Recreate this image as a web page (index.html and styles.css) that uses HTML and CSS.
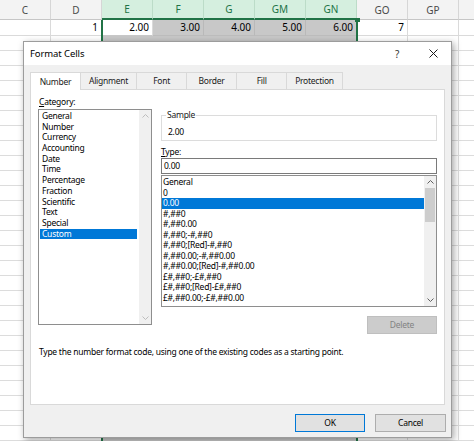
FILE: index.html
```html
<!DOCTYPE html>
<html>
<head>
<meta charset="utf-8">
<title>Format Cells</title>
<link rel="stylesheet" href="styles.css">
</head>
<body>
<div class="sheet">
  <div class="heads">
    <div class="h">C</div>
    <div class="h">D</div>
    <div class="h sel">E</div>
    <div class="h sel">F</div>
    <div class="h sel">G</div>
    <div class="h sel">GM</div>
    <div class="h sel">GN</div>
    <div class="h">GO</div>
    <div class="h">GP</div>
    <div class="h"></div>
  </div>
  <div class="row">
    <div class="c"></div>
    <div class="c">1</div>
    <div class="c active">2.00</div>
    <div class="c sel">3.00</div>
    <div class="c sel">4.00</div>
    <div class="c sel">5.00</div>
    <div class="c sel last">6.00</div>
    <div class="c">7</div>
    <div class="c"></div>
    <div class="c"></div>
  </div>
  <div class="rest"></div>
  <div class="selection"><span class="handle"></span></div>
</div>

<div class="dialog">
  <div class="titlebar">
    <span class="title">Format Cells</span>
    <span class="help">?</span>
    <svg class="close" width="9" height="9" viewBox="0 0 9 9"><path d="M0.5 0.5 L8.5 8.5 M8.5 0.5 L0.5 8.5" stroke="#1a1a1a" stroke-width="1" fill="none"/></svg>
  </div>
  <div class="dlg-body">
    <div class="tabs">
      <div class="tab active">Number</div>
      <div class="tab">Alignment</div>
      <div class="tab">Font</div>
      <div class="tab">Border</div>
      <div class="tab">Fill</div>
      <div class="tab">Protection</div>
    </div>
    <div class="panel">
      <div class="panel-main">
        <div class="col-left">
          <div class="label"><u>C</u>ategory:</div>
          <div class="listbox cat">
            <div class="items">
              <div class="item">General</div>
              <div class="item">Number</div>
              <div class="item">Currency</div>
              <div class="item">Accounting</div>
              <div class="item">Date</div>
              <div class="item">Time</div>
              <div class="item">Percentage</div>
              <div class="item">Fraction</div>
              <div class="item">Scientific</div>
              <div class="item">Text</div>
              <div class="item">Special</div>
              <div class="item selected">Custom</div>
            </div>
            <div class="vscroll disabled">
              <div class="arrow"><svg width="7" height="4" viewBox="0 0 7 4"><polyline points="0.5,3.5 3.5,0.5 6.5,3.5" fill="none" stroke="currentColor" stroke-width="1"/></svg></div>
              <div class="track"></div>
              <div class="arrow"><svg width="7" height="4" viewBox="0 0 7 4"><polyline points="0.5,0.5 3.5,3.5 6.5,0.5" fill="none" stroke="currentColor" stroke-width="1"/></svg></div>
            </div>
          </div>
        </div>
        <div class="col-right">
          <fieldset class="sample">
            <legend>Sample</legend>
            <div class="sample-val">2.00</div>
          </fieldset>
          <div class="label type-label"><u>T</u>ype:</div>
          <div class="input">0.00</div>
          <div class="listbox types">
            <div class="items">
              <div class="item">General</div>
              <div class="item">0</div>
              <div class="item selected">0.00</div>
              <div class="item">#,##0</div>
              <div class="item">#,##0.00</div>
              <div class="item">#,##0;-#,##0</div>
              <div class="item">#,##0;[Red]-#,##0</div>
              <div class="item">#,##0.00;-#,##0.00</div>
              <div class="item">#,##0.00;[Red]-#,##0.00</div>
              <div class="item">£#,##0;-£#,##0</div>
              <div class="item">£#,##0;[Red]-£#,##0</div>
              <div class="item">£#,##0.00;-£#,##0.00</div>
            </div>
            <div class="vscroll">
              <div class="arrow"><svg width="7" height="4" viewBox="0 0 7 4"><polyline points="0.5,3.5 3.5,0.5 6.5,3.5" fill="none" stroke="currentColor" stroke-width="1"/></svg></div>
              <div class="thumb"></div>
              <div class="track"></div>
              <div class="arrow"><svg width="7" height="4" viewBox="0 0 7 4"><polyline points="0.5,0.5 3.5,3.5 6.5,0.5" fill="none" stroke="currentColor" stroke-width="1"/></svg></div>
            </div>
          </div>
          <div class="btn-row"><div class="btn disabled">Delete</div></div>
        </div>
      </div>
      <p class="desc">Type the number format code, using one of the existing codes as a starting point.</p>
    </div>
    <div class="footer">
      <div class="btn default">OK</div>
      <div class="btn">Cancel</div>
    </div>
  </div>
</div>
</body>
</html>
```

FILE: styles.css
```css
* { box-sizing: border-box; }
html, body { margin: 0; padding: 0; }
body {
  width: 474px;
  height: 441px;
  overflow: hidden;
  position: relative;
  background: #fff;
  font-family: "Noto Sans", "Open Sans", sans-serif;
  color: #000;
}

/* ---------- spreadsheet ---------- */
.sheet {
  position: relative;
  width: 474px;
  height: 441px;
  overflow: hidden;
}
.heads, .row {
  display: flex;
  width: 510px;
}
.h {
  flex: 0 0 51px;
  height: 20px;
  background: #f3f3f3;
  border-right: 1px solid #d6d6d6;
  border-bottom: 1px solid #c6c6c6;
  color: #4a4a4a;
  font-size: 10px;
  display: flex;
  align-items: center;
  justify-content: center;
}
.h.sel {
  background: #d5efdf;
  color: #217346;
  border-right-color: #bcdcc8;
  border-bottom: 2px solid #217346;
}
.c {
  flex: 0 0 51px;
  height: 16px;
  border-right: 1px solid #dadada;
  border-bottom: 1px solid #dadada;
  font-size: 10px;
  line-height: 14px;
  text-align: right;
  padding-right: 3px;
}
.c.sel {
  background: #c8c8c8;
  border-right-color: #b9b9b9;
  border-bottom-color: #bdbdbd;
}
.c.active { background: #fff; border-bottom-color: #c8c8c8; }
.rest {
  height: 405px;
  width: 510px;
  background-image:
    linear-gradient(to right, transparent 102px, #c8c8c8 102px, #c8c8c8 357px, transparent 357px),
    repeating-linear-gradient(to bottom, transparent 0 14px, #dcdcdc 14px 15px),
    repeating-linear-gradient(to right, transparent 0 50px, #dcdcdc 50px 51px);
}
.selection {
  position: absolute;
  left: 101px;
  top: 20px;
  width: 257px;
  bottom: 0;
  border-left: 2px solid #217346;
  border-right: 2px solid #217346;
}
.handle {
  position: absolute;
  right: -4px;
  top: -2px;
  width: 5px;
  height: 4px;
  background: #217346;
}

/* ---------- dialog ---------- */
.dialog {
  position: absolute;
  left: 23px;
  top: 41px;
  width: 429px;
  height: 397px;
  border: 1px solid #9c9c9c;
  box-shadow: 2px 2px 7px rgba(0, 0, 0, 0.35);
  display: flex;
  flex-direction: column;
  font-size: 8.5px;
  letter-spacing: -0.25px;
  background: #f0f0f0;
}
.titlebar {
  height: 23px;
  flex: 0 0 23px;
  background: #fff;
  display: flex;
  align-items: center;
  padding: 0 13px 0 6px;
}
.title { font-size: 9.5px; letter-spacing: -0.1px; }
.help {
  margin-left: auto;
  width: 12px;
  text-align: center;
  font-size: 10px;
  color: #333;
}
.close { margin-left: 26px; display: block; }

.dlg-body {
  flex: 1;
  padding: 7px 6px 0 6px;
  display: flex;
  flex-direction: column;
}
.tabs {
  display: flex;
  align-items: flex-end;
  height: 17px;
  padding-left: 0;
}
.tab {
  min-width: 51px;
  height: 17px;
  padding: 0 8px;
  margin-right: -1px;
  border: 1px solid #d9d9d9;
  border-bottom: none;
  background: #f0f0f0;
  text-align: center;
  line-height: 16px;
  color: #1a1a1a;
}
.tab.active {
  background: #fff;
  height: 18px;
  margin-bottom: -1px;
  position: relative;
  z-index: 1;
  line-height: 18px;
}
.panel {
  height: 316px;
  background: #fff;
  border: 1px solid #d9d9d9;
  padding: 6px 0 0 7px;
}
.panel-main {
  display: flex;
  align-items: flex-start;
}
.label {
  line-height: 12px;
  height: 12px;
  padding-left: 1px;
}
.col-left { width: 114px; }
.col-left .label { margin-bottom: 1px; }
.col-right {
  width: 276px;
  margin-left: 9px;
  display: flex;
  flex-direction: column;
}

.listbox {
  border: 1px solid #8e8e8e;
  background: #fff;
  display: flex;
}
.listbox .items { flex: 1; padding-top: 1px; }
.item {
  height: 10.7px;
  line-height: 10.7px;
  padding-left: 2px;
  white-space: nowrap;
}
.item.selected { background: #0078d7; color: #fff; }
.cat { height: 216px; }
.cat .items { padding: 1px 2px 0 1px; }
.types { height: 132px; margin-top: 1px; }
.types .item { height: 10.5px; line-height: 10.5px; padding-left: 1px; }

.vscroll {
  width: 12px;
  flex: 0 0 12px;
  background: #f0f0f0;
  display: flex;
  flex-direction: column;
  color: #606060;
}
.vscroll.disabled { color: #bdbdbd; }
.vscroll .arrow {
  height: 12px;
  display: flex;
  align-items: center;
  justify-content: center;
}
.vscroll .arrow svg { display: block; }
.vscroll .track { flex: 1; }
.vscroll .thumb {
  height: 34px;
  margin: 0 1px;
  background: #cdcdcd;
}

.sample {
  margin: 13px 0 0 0;
  padding: 0 0 2px 4px;
  border: 1px solid #dcdcdc;
  min-width: 0;
}
.sample legend {
  padding: 0 1px;
  line-height: 12px;
  color: #222;
}
.sample-val {
  padding: 5px 0 0 2px;
  line-height: 12px;
}
.type-label { margin-top: 5px; height: 11px; line-height: 11px; padding-left: 0; }
.input {
  margin-top: 1px;
  height: 16px;
  border: 1px solid #7a7a7a;
  line-height: 14px;
  padding-left: 2px;
}
.btn-row {
  display: flex;
  justify-content: flex-end;
  margin-top: 9px;
}
.btn {
  width: 70px;
  height: 18px;
  border: 1px solid #adadad;
  background: #e1e1e1;
  text-align: center;
  line-height: 16px;
}
.btn.disabled {
  background: #cccccc;
  border-color: #bfbfbf;
  color: #838383;
}
.btn.default { border-color: #0078d7; }
.desc {
  margin: 12px 0 0 1px;
  line-height: 12px;
}
.footer {
  display: flex;
  justify-content: flex-end;
  gap: 10px;
  margin-top: 9px;
  margin-right: -1px;
}
.footer .btn:last-child { width: 71px; }
```
